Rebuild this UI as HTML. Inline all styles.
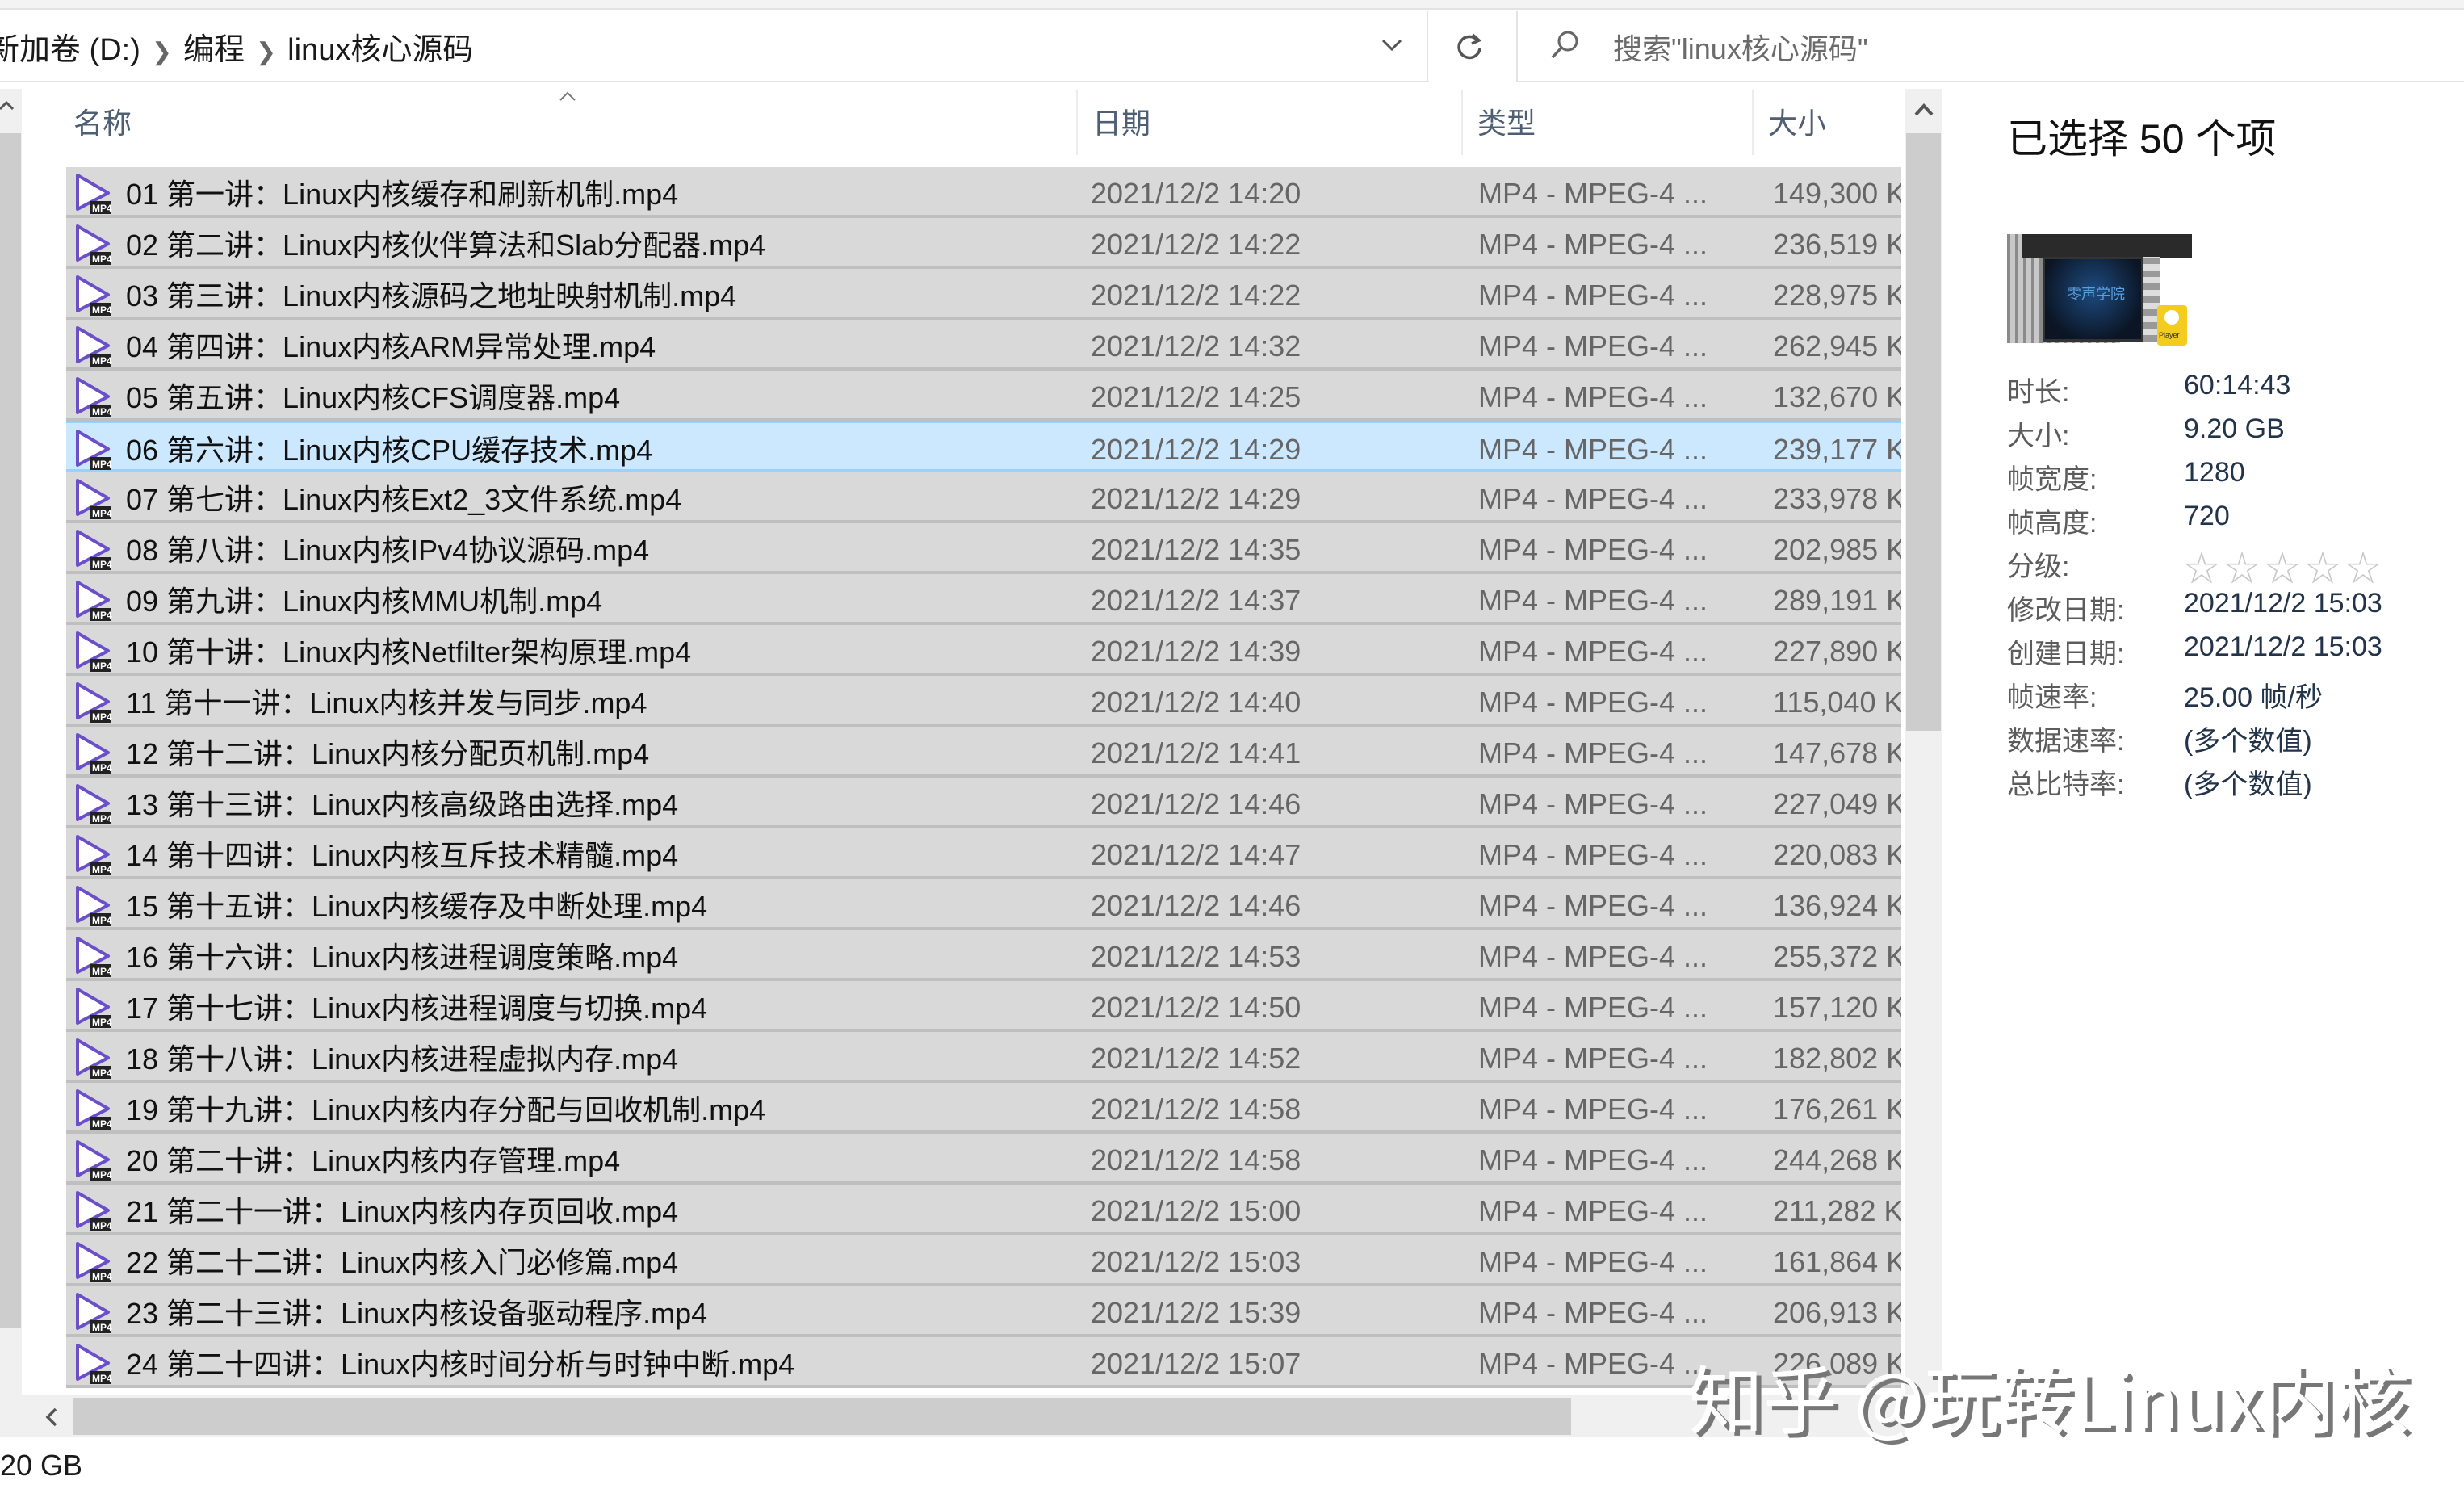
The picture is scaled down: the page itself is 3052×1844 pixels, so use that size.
<!DOCTYPE html>
<html><head><meta charset="utf-8">
<style>
*{margin:0;padding:0;box-sizing:border-box}
body{width:3052px;height:1844px;background:#fff;position:relative;overflow:hidden;font-family:"Liberation Sans","Noto Sans CJK SC",sans-serif;color:#1a1a1a}
.abs{position:absolute}
.topline{left:0;top:0;width:3052px;height:12px;background:#f3f3f3;border-bottom:2px solid #e3e3e3}
.addr{left:0;top:14px;width:1770px;height:88px;border-bottom:2px solid #e3e3e3}
.crumb{left:-14px;top:30px;font-size:38px;color:#1a1a1a;white-space:nowrap}
.crumb .sep{color:#666;font-size:30px;margin:0 14px}
.search{left:1878px;top:14px;width:1174px;height:88px;border-left:2px solid #e3e3e3;border-bottom:2px solid #e3e3e3}
.hdr{top:124px;font-size:36px;color:#4e5f73}
.coldiv{top:112px;width:2px;height:80px;background:#ececec}
.rows{left:82px;top:207px;width:2273px;height:1518px;overflow:hidden}
.row{position:relative;height:63px;background:#d9d9d9;border-bottom:4px solid #bfbfbf;font-size:36px;white-space:nowrap}
.row.sel{background:#cce8ff;border-top:2px solid #99d1ff;border-bottom:4px solid #99d1ff}
.row span{position:absolute;top:12px}
.row span.n{top:5px}
.n{left:74px;color:#111}
.d{left:1269px;color:#666}
.t{left:1749px;color:#666}
.s{left:2114px;color:#666}
.ic{position:absolute;left:8px;top:6px;width:52px;height:52px}
.lbl{left:2486px;font-size:34px;color:#5c5c5c}
.val{left:2705px;font-size:34px;color:#23344a}
</style></head><body>
<div class="abs topline"></div>
<div class="abs addr"></div>
<div class="abs crumb">新加卷 (D:)<span class="sep">❯</span>编程<span class="sep">❯</span>linux核心源码</div>
<svg class="abs" style="left:1710px;top:46px" width="28" height="20"><path d="M3 4 L14 15 L25 4" stroke="#555" stroke-width="3" fill="none"/></svg>
<div class="abs" style="left:1767px;top:14px;width:2px;height:88px;background:#e3e3e3"></div>
<svg class="abs" style="left:1800px;top:38px" width="40" height="40"><path d="M30 12 A13 13 0 1 0 33 22" stroke="#555" stroke-width="3.5" fill="none"/><path d="M24 5 L32 12 L23 16" stroke="#555" stroke-width="3.5" fill="none"/></svg>
<div class="abs search"></div>
<svg class="abs" style="left:1918px;top:36px" width="40" height="40"><circle cx="24" cy="15" r="11" stroke="#666" stroke-width="3" fill="none"/><path d="M16 23 L5 35" stroke="#666" stroke-width="3.5"/></svg>
<div class="abs" style="left:1998px;top:32px;font-size:36px;color:#6b6b6b">搜索"linux核心源码"</div>

<div class="abs" style="left:0;top:110px;width:27px;height:1670px;background:#f0f0f0"></div>
<div class="abs" style="left:0;top:165px;width:26px;height:1480px;background:#cdcdcd"></div>
<svg class="abs" style="left:0;top:125px" width="20" height="20"><path d="M0 10 L8 2 L16 10" stroke="#555" stroke-width="3" fill="none"/></svg>

<svg class="abs" style="left:692px;top:112px" width="22" height="14"><path d="M2 12 L11 3 L20 12" stroke="#777" stroke-width="2" fill="none"/></svg>
<div class="abs hdr" style="left:91px">名称</div>
<div class="abs coldiv" style="left:1333px"></div>
<div class="abs hdr" style="left:1353px">日期</div>
<div class="abs coldiv" style="left:1810px"></div>
<div class="abs hdr" style="left:1830px">类型</div>
<div class="abs coldiv" style="left:2170px"></div>
<div class="abs hdr" style="left:2190px">大小</div>

<svg width="0" height="0" style="position:absolute"><defs>
<g id="ic"><path d="M6 4 L44 26 L6 46 Z" fill="#fff" stroke="#6a4fc9" stroke-width="4" stroke-linejoin="round"/><rect x="22" y="36" width="26" height="16" fill="#222"/><text x="24" y="49" font-size="12" fill="#fff" font-family="Liberation Sans" font-weight="bold">MP4</text></g>
</defs></svg>

<div class="abs rows">
<div class="row"><svg class="ic"><use href="#ic"/></svg><span class="n">01 第一讲：Linux内核缓存和刷新机制.mp4</span><span class="d">2021/12/2 14:20</span><span class="t">MP4 - MPEG-4 ...</span><span class="s">149,300 K</span></div>
<div class="row"><svg class="ic"><use href="#ic"/></svg><span class="n">02 第二讲：Linux内核伙伴算法和Slab分配器.mp4</span><span class="d">2021/12/2 14:22</span><span class="t">MP4 - MPEG-4 ...</span><span class="s">236,519 K</span></div>
<div class="row"><svg class="ic"><use href="#ic"/></svg><span class="n">03 第三讲：Linux内核源码之地址映射机制.mp4</span><span class="d">2021/12/2 14:22</span><span class="t">MP4 - MPEG-4 ...</span><span class="s">228,975 K</span></div>
<div class="row"><svg class="ic"><use href="#ic"/></svg><span class="n">04 第四讲：Linux内核ARM异常处理.mp4</span><span class="d">2021/12/2 14:32</span><span class="t">MP4 - MPEG-4 ...</span><span class="s">262,945 K</span></div>
<div class="row"><svg class="ic"><use href="#ic"/></svg><span class="n">05 第五讲：Linux内核CFS调度器.mp4</span><span class="d">2021/12/2 14:25</span><span class="t">MP4 - MPEG-4 ...</span><span class="s">132,670 K</span></div>
<div class="row sel"><svg class="ic"><use href="#ic"/></svg><span class="n">06 第六讲：Linux内核CPU缓存技术.mp4</span><span class="d">2021/12/2 14:29</span><span class="t">MP4 - MPEG-4 ...</span><span class="s">239,177 K</span></div>
<div class="row"><svg class="ic"><use href="#ic"/></svg><span class="n">07 第七讲：Linux内核Ext2_3文件系统.mp4</span><span class="d">2021/12/2 14:29</span><span class="t">MP4 - MPEG-4 ...</span><span class="s">233,978 K</span></div>
<div class="row"><svg class="ic"><use href="#ic"/></svg><span class="n">08 第八讲：Linux内核IPv4协议源码.mp4</span><span class="d">2021/12/2 14:35</span><span class="t">MP4 - MPEG-4 ...</span><span class="s">202,985 K</span></div>
<div class="row"><svg class="ic"><use href="#ic"/></svg><span class="n">09 第九讲：Linux内核MMU机制.mp4</span><span class="d">2021/12/2 14:37</span><span class="t">MP4 - MPEG-4 ...</span><span class="s">289,191 K</span></div>
<div class="row"><svg class="ic"><use href="#ic"/></svg><span class="n">10 第十讲：Linux内核Netfilter架构原理.mp4</span><span class="d">2021/12/2 14:39</span><span class="t">MP4 - MPEG-4 ...</span><span class="s">227,890 K</span></div>
<div class="row"><svg class="ic"><use href="#ic"/></svg><span class="n">11 第十一讲：Linux内核并发与同步.mp4</span><span class="d">2021/12/2 14:40</span><span class="t">MP4 - MPEG-4 ...</span><span class="s">115,040 K</span></div>
<div class="row"><svg class="ic"><use href="#ic"/></svg><span class="n">12 第十二讲：Linux内核分配页机制.mp4</span><span class="d">2021/12/2 14:41</span><span class="t">MP4 - MPEG-4 ...</span><span class="s">147,678 K</span></div>
<div class="row"><svg class="ic"><use href="#ic"/></svg><span class="n">13 第十三讲：Linux内核高级路由选择.mp4</span><span class="d">2021/12/2 14:46</span><span class="t">MP4 - MPEG-4 ...</span><span class="s">227,049 K</span></div>
<div class="row"><svg class="ic"><use href="#ic"/></svg><span class="n">14 第十四讲：Linux内核互斥技术精髓.mp4</span><span class="d">2021/12/2 14:47</span><span class="t">MP4 - MPEG-4 ...</span><span class="s">220,083 K</span></div>
<div class="row"><svg class="ic"><use href="#ic"/></svg><span class="n">15 第十五讲：Linux内核缓存及中断处理.mp4</span><span class="d">2021/12/2 14:46</span><span class="t">MP4 - MPEG-4 ...</span><span class="s">136,924 K</span></div>
<div class="row"><svg class="ic"><use href="#ic"/></svg><span class="n">16 第十六讲：Linux内核进程调度策略.mp4</span><span class="d">2021/12/2 14:53</span><span class="t">MP4 - MPEG-4 ...</span><span class="s">255,372 K</span></div>
<div class="row"><svg class="ic"><use href="#ic"/></svg><span class="n">17 第十七讲：Linux内核进程调度与切换.mp4</span><span class="d">2021/12/2 14:50</span><span class="t">MP4 - MPEG-4 ...</span><span class="s">157,120 K</span></div>
<div class="row"><svg class="ic"><use href="#ic"/></svg><span class="n">18 第十八讲：Linux内核进程虚拟内存.mp4</span><span class="d">2021/12/2 14:52</span><span class="t">MP4 - MPEG-4 ...</span><span class="s">182,802 K</span></div>
<div class="row"><svg class="ic"><use href="#ic"/></svg><span class="n">19 第十九讲：Linux内核内存分配与回收机制.mp4</span><span class="d">2021/12/2 14:58</span><span class="t">MP4 - MPEG-4 ...</span><span class="s">176,261 K</span></div>
<div class="row"><svg class="ic"><use href="#ic"/></svg><span class="n">20 第二十讲：Linux内核内存管理.mp4</span><span class="d">2021/12/2 14:58</span><span class="t">MP4 - MPEG-4 ...</span><span class="s">244,268 K</span></div>
<div class="row"><svg class="ic"><use href="#ic"/></svg><span class="n">21 第二十一讲：Linux内核内存页回收.mp4</span><span class="d">2021/12/2 15:00</span><span class="t">MP4 - MPEG-4 ...</span><span class="s">211,282 K</span></div>
<div class="row"><svg class="ic"><use href="#ic"/></svg><span class="n">22 第二十二讲：Linux内核入门必修篇.mp4</span><span class="d">2021/12/2 15:03</span><span class="t">MP4 - MPEG-4 ...</span><span class="s">161,864 K</span></div>
<div class="row"><svg class="ic"><use href="#ic"/></svg><span class="n">23 第二十三讲：Linux内核设备驱动程序.mp4</span><span class="d">2021/12/2 15:39</span><span class="t">MP4 - MPEG-4 ...</span><span class="s">206,913 K</span></div>
<div class="row"><svg class="ic"><use href="#ic"/></svg><span class="n">24 第二十四讲：Linux内核时间分析与时钟中断.mp4</span><span class="d">2021/12/2 15:07</span><span class="t">MP4 - MPEG-4 ...</span><span class="s">226,089 K</span></div>
</div>

<div class="abs" style="left:2359px;top:110px;width:47px;height:1618px;background:#f0f0f0"></div>
<div class="abs" style="left:2361px;top:165px;width:43px;height:740px;background:#cdcdcd"></div>
<svg class="abs" style="left:2370px;top:126px" width="26" height="20"><path d="M3 16 L13 5 L23 16" stroke="#555" stroke-width="4" fill="none"/></svg>
<div class="abs" style="left:27px;top:1728px;width:2332px;height:51px;background:#f0f0f0"></div>
<div class="abs" style="left:91px;top:1731px;width:1855px;height:46px;background:#cdcdcd"></div>
<svg class="abs" style="left:54px;top:1742px" width="20" height="26"><path d="M15 3 L5 13 L15 23" stroke="#555" stroke-width="3.5" fill="none"/></svg>
<div class="abs" style="left:0;top:1794px;font-size:36px;color:#1a1a1a">20 GB</div>

<div class="abs" style="left:2486px;top:132px;font-size:50px;color:#111">已选择 50 个项</div>
<div class="abs" style="left:2486px;top:290px;width:140px;height:135px;background:repeating-linear-gradient(90deg,#8a8a8a 0 4px,#c8c8c8 4px 10px)"></div>
<div class="abs" style="left:2505px;top:290px;width:210px;height:30px;background:#2a2a2a"></div>
<div class="abs" style="left:2530px;top:318px;width:125px;height:105px;background:radial-gradient(circle at 50% 40%,#1d4b80,#0b1524 75%);border:3px solid #333"></div>
<div class="abs" style="left:2655px;top:318px;width:20px;height:105px;background:repeating-linear-gradient(0deg,#999 0 8px,#ddd 8px 16px)"></div>
<div class="abs" style="left:2560px;top:350px;font-size:18px;color:#5aa0e0;font-family:'Noto Sans CJK SC',sans-serif">零声学院</div>
<div class="abs" style="left:2672px;top:378px;width:37px;height:50px;background:#f4cc20;border-radius:4px"></div>
<div class="abs" style="left:2681px;top:384px;width:18px;height:18px;border-radius:50%;background:#fff"></div>
<div class="abs" style="left:2674px;top:410px;font-size:9px;color:#333">Player</div>

<div class="abs lbl" style="top:458px">时长:</div><div class="abs val" style="top:458px">60:14:43</div>
<div class="abs lbl" style="top:512px">大小:</div><div class="abs val" style="top:512px">9.20 GB</div>
<div class="abs lbl" style="top:566px">帧宽度:</div><div class="abs val" style="top:566px">1280</div>
<div class="abs lbl" style="top:620px">帧高度:</div><div class="abs val" style="top:620px">720</div>
<div class="abs lbl" style="top:674px">分级:</div><div class="abs val" style="top:668px;color:#c8c8c8;font-size:44px;letter-spacing:6px">☆☆☆☆☆</div>
<div class="abs lbl" style="top:728px">修改日期:</div><div class="abs val" style="top:728px">2021/12/2 15:03</div>
<div class="abs lbl" style="top:782px">创建日期:</div><div class="abs val" style="top:782px">2021/12/2 15:03</div>
<div class="abs lbl" style="top:836px">帧速率:</div><div class="abs val" style="top:836px">25.00 帧/秒</div>
<div class="abs lbl" style="top:890px">数据速率:</div><div class="abs val" style="top:890px">(多个数值)</div>
<div class="abs lbl" style="top:944px">总比特率:</div><div class="abs val" style="top:944px">(多个数值)</div>

<div class="abs" style="left:2092px;top:1662px;font-size:92px;color:#fff;text-shadow:6px 5px 0 #777;font-family:'Noto Sans CJK SC',sans-serif;white-space:nowrap">知乎 @玩转Linux内核</div>
</body></html>
